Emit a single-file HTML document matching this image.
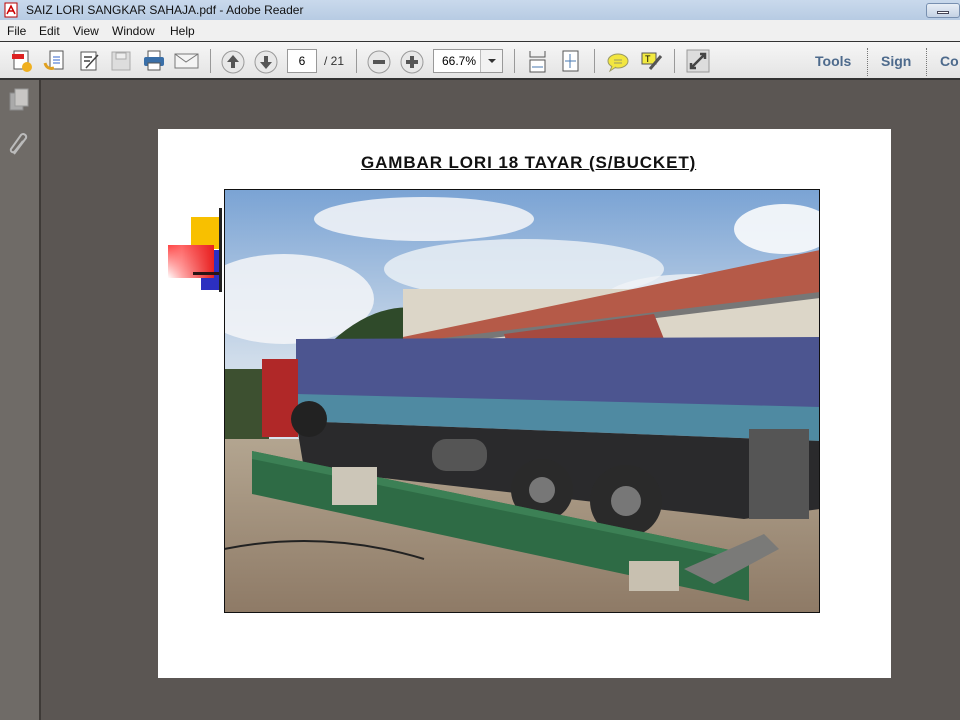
<!DOCTYPE html>
<html><head><style>
*{margin:0;padding:0;box-sizing:border-box}
body{width:960px;height:720px;overflow:hidden;background:#5b5653;font-family:"Liberation Sans",sans-serif;position:relative}
.title{position:absolute;left:0;top:0;width:960px;height:20px;background:linear-gradient(#c9d9ec,#b7cbe3);font-size:12px;color:#111}
.menu{position:absolute;left:0;top:20px;width:960px;height:21px;background:#f0f0f0;font-size:12px;color:#111}
.menu span{position:absolute;top:4px}
.tb{position:absolute;left:0;top:41px;width:960px;height:39px;background:linear-gradient(#f6f6f6,#e4e4e4);border-top:1px solid #333;border-bottom:2px solid #333}
.ic{position:absolute}
.sep{position:absolute;top:7px;width:1px;height:24px;background:#999}
.side{position:absolute;left:0;top:80px;width:41px;height:640px;background:#6f6b67;border-right:2px solid #3e3a37}
.page{position:absolute;left:158px;top:129px;width:733px;height:549px;background:#fff}
.h{position:absolute;left:361px;top:153px;font-size:17px;font-weight:bold;text-decoration:underline;color:#111;letter-spacing:0.9px;white-space:nowrap}
</style></head><body>
<div class="title">
<svg class="ic" style="left:4px;top:2px" width="14" height="16"><rect x="1" y="1" width="12" height="14" fill="#fff" stroke="#b00"/><path d="M3 12 L7 4 L11 12 M4 9 H10" stroke="#c00" stroke-width="1.5" fill="none"/></svg>
<span style="position:absolute;left:26px;top:3px">SAIZ LORI SANGKAR SAHAJA.pdf - Adobe Reader</span>
<div style="position:absolute;left:926px;top:3px;width:34px;height:15px;border:1px solid #7890b0;border-radius:3px;background:linear-gradient(#e8eef6,#c4d2e4)"><div style="position:absolute;left:10px;top:7px;width:12px;height:3px;background:#fff;border:1px solid #445"></div></div>
</div>
<div class="menu"><span style="left:7px">File</span><span style="left:39px">Edit</span><span style="left:73px">View</span><span style="left:112px">Window</span><span style="left:170px">Help</span></div>
<div class="tb">
<svg class="ic" style="left:10px;top:7px" width="24" height="24"><rect x="4" y="2" width="14" height="18" fill="#fff" stroke="#555"/><rect x="2" y="5" width="12" height="5" fill="#d22"/><circle cx="17" cy="18" r="5" fill="#f0b020"/></svg>
<svg class="ic" style="left:42px;top:7px" width="24" height="24"><rect x="8" y="2" width="13" height="18" fill="#fff" stroke="#555"/><path d="M11 8h7M11 11h7M11 14h7" stroke="#36c"/><path d="M3 14 q2 7 9 5" stroke="#e0a020" stroke-width="3" fill="none"/></svg>
<svg class="ic" style="left:78px;top:7px" width="24" height="24"><rect x="3" y="3" width="15" height="18" fill="#fff" stroke="#555"/><path d="M6 8h8M6 12h6M8 19 L20 6" stroke="#444" stroke-width="1.5"/></svg>
<svg class="ic" style="left:110px;top:8px" width="22" height="22"><rect x="2" y="2" width="18" height="18" fill="#ddd" stroke="#aaa"/><rect x="6" y="3" width="10" height="6" fill="#eee" stroke="#aaa"/></svg>
<svg class="ic" style="left:142px;top:7px" width="24" height="24"><rect x="6" y="2" width="12" height="7" fill="#fff" stroke="#555"/><rect x="2" y="8" width="20" height="9" rx="2" fill="#3a6fa8"/><rect x="6" y="14" width="12" height="7" fill="#fff" stroke="#555"/></svg>
<svg class="ic" style="left:174px;top:10px" width="26" height="18"><rect x="1" y="2" width="23" height="14" fill="#f4f4f4" stroke="#777"/><path d="M1 2 L12 10 L24 2" stroke="#777" fill="none"/></svg>
<div class="sep" style="left:210px"></div>
<svg class="ic" style="left:221px;top:8px" width="24" height="24"><circle cx="12" cy="12" r="11" fill="#e8e8e8" stroke="#999"/><path d="M12 5 L18 12 H14 V18 H10 V12 H6 Z" fill="#555"/></svg>
<svg class="ic" style="left:254px;top:8px" width="24" height="24"><circle cx="12" cy="12" r="11" fill="#e8e8e8" stroke="#999"/><path d="M12 19 L18 12 H14 V6 H10 V12 H6 Z" fill="#555"/></svg>
<div style="position:absolute;left:287px;top:7px;width:30px;height:24px;background:#fff;border:1px solid #999;font-size:12px;text-align:center;line-height:22px">6</div>
<span style="position:absolute;left:324px;top:12px;font-size:12px;color:#333">/ 21</span>
<div class="sep" style="left:356px"></div>
<svg class="ic" style="left:367px;top:8px" width="24" height="24"><circle cx="12" cy="12" r="11" fill="#e8e8e8" stroke="#999"/><rect x="6" y="10" width="12" height="4" fill="#555"/></svg>
<svg class="ic" style="left:400px;top:8px" width="24" height="24"><circle cx="12" cy="12" r="11" fill="#e8e8e8" stroke="#999"/><rect x="6" y="10" width="12" height="4" fill="#555"/><rect x="10" y="6" width="4" height="12" fill="#555"/></svg>
<div style="position:absolute;left:433px;top:7px;width:70px;height:24px;background:#fff;border:1px solid #999;font-size:12px;line-height:22px;padding-left:8px">66.7%<div style="position:absolute;right:0;top:0;width:22px;height:22px;border-left:1px solid #bbb;background:#f2f2f2"><div style="position:absolute;left:7px;top:9px;border:4px solid transparent;border-top:4px solid #333"></div></div></div>
<div class="sep" style="left:514px"></div>
<svg class="ic" style="left:527px;top:8px" width="22" height="24"><path d="M3 1v6h15V1" stroke="#555" fill="none"/><rect x="3" y="10" width="15" height="12" fill="#fff" stroke="#555"/><path d="M5 17h11" stroke="#4a7ab0"/></svg>
<svg class="ic" style="left:560px;top:7px" width="22" height="24"><rect x="3" y="2" width="15" height="20" fill="#fff" stroke="#555"/><path d="M10 5v14M5 12h11" stroke="#4a7ab0"/></svg>
<div class="sep" style="left:594px"></div>
<svg class="ic" style="left:606px;top:9px" width="24" height="22"><ellipse cx="12" cy="10" rx="10" ry="7" fill="#f2e640" stroke="#996"/><path d="M6 15 L4 20 L10 16" fill="#f2e640" stroke="#996"/><path d="M8 9h8M8 12h8" stroke="#996"/></svg>
<svg class="ic" style="left:640px;top:8px" width="24" height="22"><rect x="2" y="3" width="14" height="11" fill="#f2ea40" stroke="#555"/><text x="5" y="12" font-size="9" font-family="Liberation Sans">T</text><path d="M10 19 L21 6" stroke="#555" stroke-width="3"/></svg>
<div class="sep" style="left:674px"></div>
<svg class="ic" style="left:686px;top:7px" width="24" height="24"><rect x="1" y="1" width="22" height="22" fill="#ddd" stroke="#999"/><path d="M5 19 L19 5 M14 5h5v5 M5 14v5h5" stroke="#444" stroke-width="2.5" fill="none"/></svg>
<span style="position:absolute;left:815px;top:11px;font-size:14px;font-weight:bold;color:#4d6a8c">Tools</span>
<div style="position:absolute;left:867px;top:6px;height:28px;border-left:1px dotted #777"></div>
<span style="position:absolute;left:881px;top:11px;font-size:14px;font-weight:bold;color:#4d6a8c">Sign</span>
<div style="position:absolute;left:926px;top:6px;height:28px;border-left:1px dotted #777"></div>
<span style="position:absolute;left:940px;top:11px;font-size:14px;font-weight:bold;color:#4d6a8c">Co</span>
</div>
<div class="side">
<svg class="ic" style="left:9px;top:8px" width="22" height="24"><rect x="1" y="5" width="13" height="17" fill="#aaa" stroke="#888"/><rect x="6" y="1" width="13" height="17" fill="#c8c6c4" stroke="#999"/></svg>
<svg class="ic" style="left:8px;top:52px" width="24" height="26"><path d="M6 22 L18 6 a3 3 0 0 0 -5 -3 L3 17 a2 2 0 0 0 4 2 L15 9" stroke="#bbb" stroke-width="2" fill="none"/></svg>
</div>
<div class="page"></div>
<div class="h">GAMBAR LORI 18 TAYAR (S/BUCKET)</div>
<div style="position:absolute;left:191px;top:217px;width:28px;height:32px;background:#f8c000"></div>
<div style="position:absolute;left:201px;top:250px;width:21px;height:40px;background:#2c2fc0"></div>
<div style="position:absolute;left:168px;top:245px;width:46px;height:33px;background:linear-gradient(to left,#e82020,rgba(255,120,120,0.6) 70%,rgba(255,255,255,0)),linear-gradient(#f44,#fff)"></div>
<div style="position:absolute;left:193px;top:272px;width:29px;height:3px;background:#2a1414"></div>
<div style="position:absolute;left:219px;top:208px;width:3px;height:84px;background:#222"></div>
<svg style="position:absolute;left:224px;top:189px" width="596" height="424" viewBox="0 0 596 424">
<defs><linearGradient id="sky" x1="0" y1="0" x2="0" y2="1"><stop offset="0" stop-color="#7aa3d4"/><stop offset="0.4" stop-color="#cfdcea"/><stop offset="1" stop-color="#eef2f6"/></linearGradient>
<linearGradient id="gr" x1="0" y1="0" x2="0" y2="1"><stop offset="0" stop-color="#b3a590"/><stop offset="1" stop-color="#8e7a66"/></linearGradient></defs>
<rect width="596" height="424" fill="url(#sky)"/>
<ellipse cx="200" cy="30" rx="110" ry="22" fill="#f4f6f8" opacity=".85"/>
<ellipse cx="300" cy="80" rx="140" ry="30" fill="#eef2f6" opacity=".8"/>
<ellipse cx="60" cy="110" rx="90" ry="45" fill="#f4f6f8" opacity=".85"/>
<ellipse cx="560" cy="40" rx="50" ry="25" fill="#fafbfc" opacity=".9"/>
<ellipse cx="470" cy="110" rx="90" ry="25" fill="#f0f3f6" opacity=".8"/>
<path d="M100 160 Q150 110 200 120 Q250 100 290 110 L290 170 L100 175Z" fill="#2f4a2a"/>
<rect x="0" y="180" width="45" height="80" fill="#3d5030"/>
<rect x="179" y="100" width="417" height="60" fill="#dcd6c8"/>
<path d="M179 148 L596 61 L596 105 L179 156Z" fill="#b55a48"/>
<path d="M179 154 L596 103 L596 109 L179 160Z" fill="#777"/>
<path d="M280 145 L430 125 L440 150 L285 160Z" fill="#a64a40"/>
<rect x="0" y="250" width="596" height="174" fill="url(#gr)"/>
<path d="M72 150 L596 148 L596 228 L72 212Z" fill="#4c5590"/>
<path d="M72 205 L596 218 L596 252 L72 232Z" fill="#4f8aa2"/>
<path d="M72 232 L596 252 L596 320 L520 330 L80 280Z" fill="#2a2a2c"/>
<rect x="38" y="170" width="36" height="78" fill="#b02828"/>
<circle cx="85" cy="230" r="18" fill="#222"/>
<circle cx="318" cy="301" r="31" fill="#2a2a2a"/><circle cx="318" cy="301" r="13" fill="#777"/>
<circle cx="402" cy="312" r="36" fill="#2a2a2a"/><circle cx="402" cy="312" r="15" fill="#777"/>
<rect x="208" y="250" width="55" height="32" rx="14" fill="#555"/>
<rect x="525" y="240" width="60" height="90" fill="#555"/>
<path d="M28 262 L525 365 L525 412 L28 305Z" fill="#2e6b45"/>
<path d="M28 262 L525 365 L525 372 L28 270Z" fill="#3c8055"/>
<rect x="108" y="278" width="45" height="38" fill="#ccc6b8"/>
<path d="M460 380 L540 345 L555 360 L490 395Z" fill="#7a7a78"/>
<rect x="405" y="372" width="50" height="30" fill="#c8c0b0"/>
<path d="M0 360 Q100 340 200 370" stroke="#222" stroke-width="2" fill="none"/>
<rect x="0.5" y="0.5" width="595" height="423" fill="none" stroke="#111"/>
</svg>
</body></html>
